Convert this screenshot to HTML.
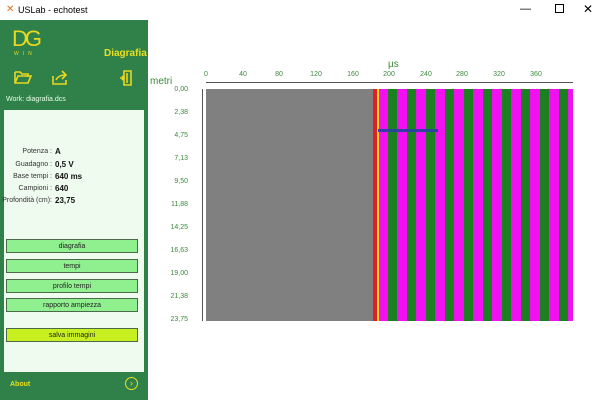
<!DOCTYPE html><html><head><style>
body{margin:0;width:600px;height:400px;overflow:hidden;background:#fff;font-family:"Liberation Sans",sans-serif;position:relative}
.a{position:absolute}
.tb{left:0;top:0;width:600px;height:20px;background:#fff;font-size:9px}
.side{left:0;top:20px;width:148px;height:380px;background:#2f8149}
.box{left:4px;top:110px;width:140px;height:262px;background:#f0fbf0}
.lbl{font-size:7px;color:#333;text-align:right;width:50px}
.val{font-size:8px;font-weight:bold;color:#111}
.btn{left:6px;width:132px;height:14px;background:#90f090;border:1px solid #4a6a4a;font-size:7px;text-align:center;line-height:14px;color:#222;box-sizing:border-box}
.xl{font-size:7px;color:#3a8a3a;top:71px;transform:translateX(-50%)}
.yl{font-size:7px;color:#3a8a3a;left:168px;width:20px;text-align:right}
</style></head><body>
<div class="a tb"><span class="a" style="left:6px;top:4px;color:#e07020;font-size:10px">✕</span><span class="a" style="left:18px;top:5px">USLab - echotest</span>
<span class="a" style="left:520px;top:3px;font-size:11px">—</span><span class="a" style="left:555px;top:4px;width:7px;height:7px;border:1px solid #000"></span><span class="a" style="left:583px;top:2px;font-size:12px">✕</span></div>
<div class="a side"></div>
<div class="a" style="left:12px;top:26px;color:#e8d820;font-size:22px;letter-spacing:-3px">DG</div>
<div class="a" style="left:14px;top:51px;color:#e8d820;font-size:5px;letter-spacing:4px">WIN</div>
<div class="a" style="left:104px;top:48px;color:#e8e020;font-size:10px;font-weight:bold">Diagrafia</div>
<svg class="a" style="left:12px;top:68px" width="140" height="20" fill="none" stroke="#e8d820" stroke-width="1.6">
<path d="M3 4h5l2 2h6v3M3 4v11h13l3-7H6l-3 7"/>
<path d="M41 8v8h13v-4M44 12c2-4 5-5 9-5M50 3l4 4-4 4"/>
<path d="M112 3h7v14h-7zM115 5v10M108 10h5M110 8l2 2-2 2"/>
</svg>
<div class="a" style="left:6px;top:96px;color:#e8ffe8;font-size:7px">Work: diagrafia.dcs</div>
<div class="a box"></div>
<div class="a lbl" style="left:2px;top:148px">Potenza :</div><div class="a val" style="left:55px;top:147px">A</div>
<div class="a lbl" style="left:2px;top:161px">Guadagno :</div><div class="a val" style="left:55px;top:160px">0,5 V</div>
<div class="a lbl" style="left:2px;top:173px">Base tempi :</div><div class="a val" style="left:55px;top:172px">640 ms</div>
<div class="a lbl" style="left:2px;top:185px">Campioni :</div><div class="a val" style="left:55px;top:184px">640</div>
<div class="a lbl" style="left:2px;top:197px">Profondità (cm):</div><div class="a val" style="left:55px;top:196px">23,75</div>
<div class="a btn" style="top:239px">diagrafia</div>
<div class="a btn" style="top:259px">tempi</div>
<div class="a btn" style="top:279px">profilo tempi</div>
<div class="a btn" style="top:298px">rapporto ampiezza</div>
<div class="a btn" style="top:328px;background:#c8f020">salva immagini</div>
<div class="a" style="left:10px;top:381px;color:#e8e020;font-size:7px;font-weight:bold">About</div>
<div class="a" style="left:125px;top:377px;width:11px;height:11px;border:1.5px solid #e8e020;border-radius:50%;color:#e8e020;font-size:9px;line-height:11px;text-align:center">›</div>
<div class="a" style="left:150px;top:76px;color:#3a8a3a;font-size:10px">metri</div>
<div class="a" style="left:388px;top:59px;color:#3a8a3a;font-size:10px">µs</div>
<div class="a" style="left:206px;top:82px;width:367px;height:1px;background:#555"></div>
<div class="a" style="left:202px;top:89px;width:1px;height:232px;background:#555"></div>
<div class="a xl" style="left:206px">0</div><div class="a xl" style="left:243px">40</div><div class="a xl" style="left:279px">80</div><div class="a xl" style="left:316px">120</div><div class="a xl" style="left:353px">160</div><div class="a xl" style="left:389px">200</div><div class="a xl" style="left:426px">240</div><div class="a xl" style="left:462px">280</div><div class="a xl" style="left:499px">320</div><div class="a xl" style="left:536px">360</div>
<div class="a yl" style="top:86px">0,00</div><div class="a yl" style="top:109px">2,38</div><div class="a yl" style="top:132px">4,75</div><div class="a yl" style="top:155px">7,13</div><div class="a yl" style="top:178px">9,50</div><div class="a yl" style="top:201px">11,88</div><div class="a yl" style="top:224px">14,25</div><div class="a yl" style="top:247px">16,63</div><div class="a yl" style="top:270px">19,00</div><div class="a yl" style="top:293px">21,38</div><div class="a yl" style="top:316px">23,75</div>
<div class="a" style="left:206px;top:89px;width:367px;height:232px;background:#808080;overflow:hidden">
<div class="a" style="left:172px;top:0;width:200px;height:232px;background:repeating-linear-gradient(90deg,#f010f0 0 10px,#1a8020 10px 19px)"></div>
<div class="a" style="left:167px;top:0;width:4px;height:232px;background:#e02020"></div>
<div class="a" style="left:171px;top:0;width:2px;height:232px;background:#f0e020"></div>
<div class="a" style="left:172px;top:40px;width:60px;height:3px;background:#3040a0"></div>
</div>
</body></html>
